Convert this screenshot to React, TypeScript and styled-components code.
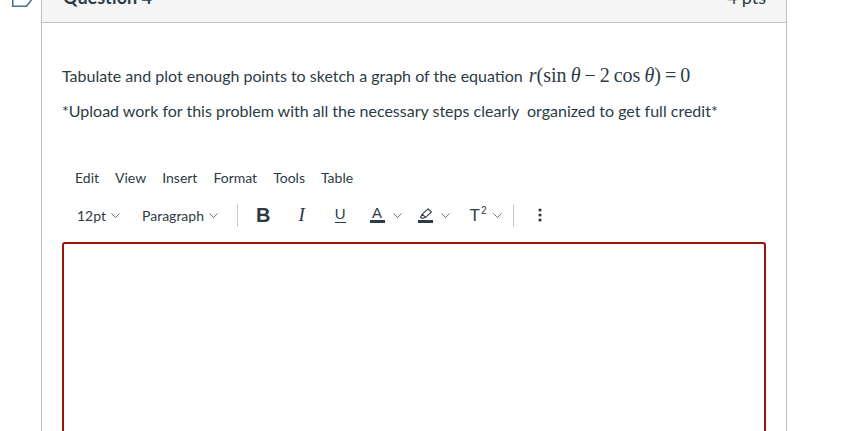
import React from 'react';
import styled, { createGlobalStyle } from 'styled-components';

const GlobalStyle = createGlobalStyle`
  html, body {
    margin: 0;
    padding: 0;
    background: #ffffff;
    overflow: hidden;
  }
  body {
    font-family: Lato, "Liberation Sans", sans-serif;
    color: #2d3b45;
  }
`;

const Page = styled.div`
  display: flex;
  align-items: flex-start;
  width: 851px;
  height: 431px;
  overflow: hidden;
`;

const FlagColumn = styled.div`
  width: 41px;
  padding-left: 12px;
  box-sizing: border-box;
  flex-shrink: 0;
`;

const Card = styled.div`
  width: 746px;
  box-sizing: border-box;
  margin-top: -24px;
  border: 1px solid #b9bfc4;
  flex-shrink: 0;
  min-height: 480px;
`;

const Header = styled.div`
  display: flex;
  align-items: flex-end;
  justify-content: space-between;
  padding: 0 20px 13px 21px;
  box-sizing: border-box;
  height: 46px;
  background: #f5f5f5;
  border-bottom: 1px solid #b9bfc4;
  font-size: 18px;
  line-height: 21.6px;
`;

const QuestionName = styled.span`
  font-weight: 700;
`;

const Points = styled.span`
  font-weight: 400;
`;

const Body = styled.div`
  padding: 41px 20px 0 20px;
`;

const Paragraph = styled.p<{ $space?: number }>`
  margin: ${({ $space }) => $space ?? 0}px 0 0 0;
  font-size: 16px;
  line-height: 24px;
  white-space: pre;
`;

const MathExpr = styled.span`
  font-family: "Liberation Serif", "DejaVu Serif", serif;
  font-size: 20px;
  line-height: 1;
  white-space: nowrap;
  margin-left: 2px;
`;

const MathVar = styled.i`
  font-style: italic;
`;

const MathOp = styled.span`
  margin: 0 4px;
`;

const MenuBar = styled.div`
  display: flex;
  gap: 16px;
  margin-top: 45px;
  padding-left: 13px;
  height: 20px;
  font-size: 14px;
  line-height: 20px;
`;

const MenuItem = styled.span`
  color: #2d3b45;
`;

const Toolbar = styled.div`
  display: flex;
  align-items: center;
  height: 36px;
  margin-top: 9px;
  padding-left: 15px;
`;

const Tool = styled.div<{ $ml?: number }>`
  display: flex;
  align-items: center;
  margin-left: ${({ $ml }) => $ml ?? 0}px;
  font-size: 14px;
  color: #2d3b45;
`;

const Separator = styled.div<{ $ml: number }>`
  width: 1px;
  height: 23px;
  background: #c7cdd1;
  margin-left: ${({ $ml }) => $ml}px;
`;

const BoldGlyph = styled.span`
  font-family: "Liberation Sans", sans-serif;
  font-weight: 700;
  font-size: 20px;
  line-height: 20px;
`;

const ItalicGlyph = styled.span`
  font-family: "Liberation Serif", serif;
  font-style: italic;
  font-size: 19px;
  line-height: 20px;
`;

const UnderGlyph = styled.span`
  font-family: "Liberation Sans", sans-serif;
  font-size: 15px;
  line-height: 13px;
  padding-bottom: 2px;
  border-bottom: 1.2px solid #2d3b45;
`;

const ColorStack = styled.div`
  display: flex;
  flex-direction: column;
  align-items: center;
  width: 15px;
`;

const ColorLetter = styled.span`
  font-family: "Liberation Sans", sans-serif;
  font-size: 15px;
  line-height: 12px;
`;

const ColorBar = styled.div`
  width: 15px;
  height: 3px;
  margin-top: 1px;
  background: #2d3b45;
`;

const SuperGlyph = styled.span`
  display: flex;
  align-items: flex-start;
  font-family: "Liberation Sans", sans-serif;
  font-size: 17px;
  line-height: 17px;
`;

const SuperScript = styled.span`
  font-size: 10px;
  line-height: 10px;
  margin-left: 1px;
  margin-top: -1px;
`;

const Editor = styled.div`
  margin-top: 9px;
  height: 260px;
  border: 2px solid #9b140a;
  border-radius: 3px;
`;

function Chevron({ ml = 8 }: { ml?: number }) {
  return (
    <svg width="9" height="5" viewBox="0 0 9 5" style={{ marginLeft: ml, display: 'block' }}>
      <polyline points="0.5,0.5 4.5,4.5 8.5,0.5" fill="none" stroke="#6b7780" strokeWidth="1" />
    </svg>
  );
}

function HighlighterIcon() {
  return (
    <svg width="15" height="11" viewBox="0 0 15 11" style={{ display: 'block' }}>
      <path
        d="M2.5 9.5 L4.2 6.2 L10.2 0.8 L13.4 3.8 L7.6 9.4 L4.4 10.2 Z M4.2 6.2 L7.6 9.4"
        fill="none"
        stroke="#2d3b45"
        strokeWidth="1.1"
        strokeLinejoin="round"
      />
      <path d="M2.5 9.5 L4.4 10.2 L3.2 10.6 Z" fill="#2d3b45" />
    </svg>
  );
}

function MoreIcon() {
  return (
    <svg width="4" height="14" viewBox="0 0 4 14" style={{ display: 'block' }}>
      <circle cx="2" cy="2" r="1.6" fill="#2d3b45" />
      <circle cx="2" cy="7" r="1.6" fill="#2d3b45" />
      <circle cx="2" cy="12" r="1.6" fill="#2d3b45" />
    </svg>
  );
}

function FlagIcon() {
  return (
    <svg width="21" height="8" viewBox="0 0 21 8" style={{ display: 'block' }}>
      <polyline points="0.75,-2 0.75,6.25 14.5,6.25 19.8,-0.5" fill="none" stroke="#4a6f8f" strokeWidth="1.5" />
    </svg>
  );
}

export default function App() {
  return (
    <>
      <GlobalStyle />
      <Page>
        <FlagColumn>
          <FlagIcon />
        </FlagColumn>
        <Card>
          <Header>
            <QuestionName>Question 4</QuestionName>
            <Points>4 pts</Points>
          </Header>
          <Body>
            <Paragraph>
              Tabulate and plot enough points to sketch a graph of the equation{' '}
              <MathExpr>
                <MathVar>r</MathVar>(sin&#8201;<MathVar>θ</MathVar>
                <MathOp>&minus;</MathOp>2&#8201;cos&#8201;<MathVar>θ</MathVar>)<MathOp>=</MathOp>0
              </MathExpr>
            </Paragraph>
            <Paragraph $space={11}>
              *Upload work for this problem with all the necessary steps clearly  organized to get full credit*
            </Paragraph>

            <MenuBar>
              {['Edit', 'View', 'Insert', 'Format', 'Tools', 'Table'].map((m) => (
                <MenuItem key={m}>{m}</MenuItem>
              ))}
            </MenuBar>

            <Toolbar>
              <Tool>
                12pt
                <Chevron ml={5} />
              </Tool>
              <Tool $ml={22}>
                Paragraph
                <Chevron ml={5} />
              </Tool>
              <Separator $ml={19} />
              <Tool $ml={18}>
                <BoldGlyph>B</BoldGlyph>
              </Tool>
              <Tool $ml={28}>
                <ItalicGlyph>I</ItalicGlyph>
              </Tool>
              <Tool $ml={30}>
                <UnderGlyph>U</UnderGlyph>
              </Tool>
              <Tool $ml={24}>
                <ColorStack>
                  <ColorLetter>A</ColorLetter>
                  <ColorBar />
                </ColorStack>
                <Chevron />
              </Tool>
              <Tool $ml={16}>
                <ColorStack>
                  <HighlighterIcon />
                  <ColorBar />
                </ColorStack>
                <Chevron />
              </Tool>
              <Tool $ml={20}>
                <SuperGlyph>
                  T<SuperScript>2</SuperScript>
                </SuperGlyph>
                <Chevron ml={6} />
              </Tool>
              <Separator $ml={11} />
              <Tool $ml={24}>
                <MoreIcon />
              </Tool>
            </Toolbar>

            <Editor />
          </Body>
        </Card>
      </Page>
    </>
  );
}
